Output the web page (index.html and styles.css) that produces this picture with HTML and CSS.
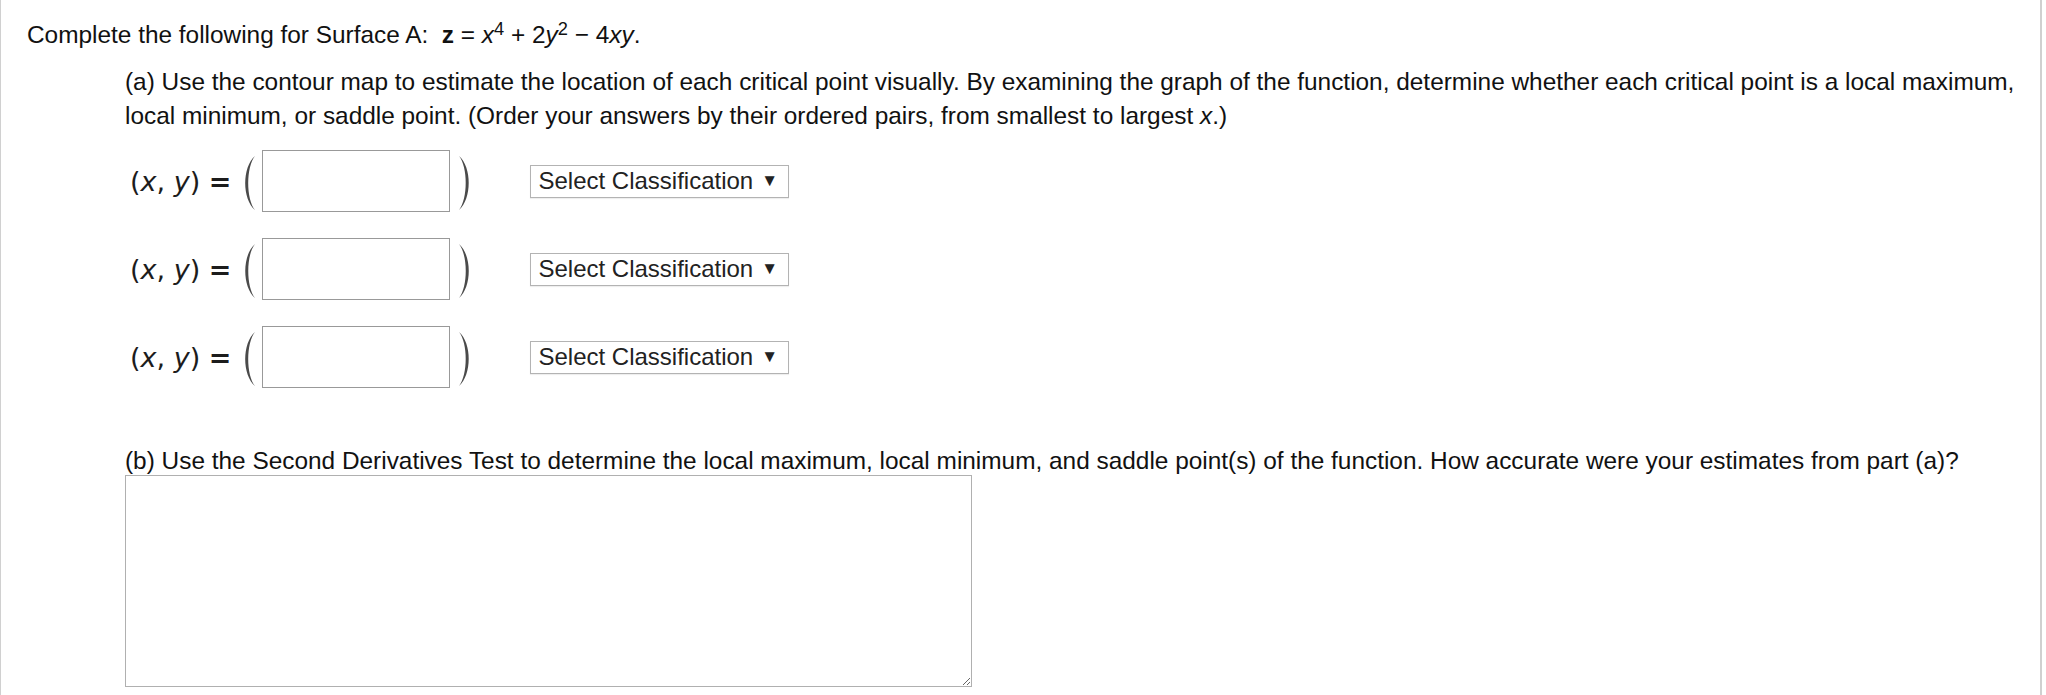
FILE: index.html
```html
<!DOCTYPE html>
<html lang="en">
<head>
    <meta charset="UTF-8">
    <title>Surface A</title>
    <link rel="stylesheet" href="styles.css">
</head>
<body>
    <div class="question">
        <p class="prompt">Complete the following for Surface A:&nbsp; <b class="var-z">z</b> = <i>x</i><sup>4</sup> + 2<i>y</i><sup>2</sup> &minus; 4<i>xy</i>.</p>

        <div class="part">
            <p class="part-text">(a) Use the contour map to estimate the location of each critical point visually. By examining the graph of the function, determine whether each critical point is a local maximum, local minimum, or saddle point. (Order your answers by their ordered pairs, from smallest to largest <i>x</i>.)</p>

            <div class="points">
                <div class="point-row">
                    <span class="pair-label">(<i>x</i>, <i>y</i>) <span class="eq">=</span></span>
                    <svg class="paren" width="18" height="56" viewBox="0 0 18 56"><path d="M16 1 C3 12 3 44 16 55 C7 44 7 12 16 1 Z"/></svg>
                    <input class="answer" type="text">
                    <svg class="paren close" width="18" height="56" viewBox="0 0 18 56"><path d="M2 1 C15 12 15 44 2 55 C11 44 11 12 2 1 Z"/></svg>
                    <div class="select">Select Classification <span class="caret">&#9660;</span></div>
                </div>
                <div class="point-row">
                    <span class="pair-label">(<i>x</i>, <i>y</i>) <span class="eq">=</span></span>
                    <svg class="paren" width="18" height="56" viewBox="0 0 18 56"><path d="M16 1 C3 12 3 44 16 55 C7 44 7 12 16 1 Z"/></svg>
                    <input class="answer" type="text">
                    <svg class="paren close" width="18" height="56" viewBox="0 0 18 56"><path d="M2 1 C15 12 15 44 2 55 C11 44 11 12 2 1 Z"/></svg>
                    <div class="select">Select Classification <span class="caret">&#9660;</span></div>
                </div>
                <div class="point-row">
                    <span class="pair-label">(<i>x</i>, <i>y</i>) <span class="eq">=</span></span>
                    <svg class="paren" width="18" height="56" viewBox="0 0 18 56"><path d="M16 1 C3 12 3 44 16 55 C7 44 7 12 16 1 Z"/></svg>
                    <input class="answer" type="text">
                    <svg class="paren close" width="18" height="56" viewBox="0 0 18 56"><path d="M2 1 C15 12 15 44 2 55 C11 44 11 12 2 1 Z"/></svg>
                    <div class="select">Select Classification <span class="caret">&#9660;</span></div>
                </div>
            </div>

            <p class="part-text part-b">(b) Use the Second Derivatives Test to determine the local maximum, local minimum, and saddle point(s) of the function. How accurate were your estimates from part (a)?</p>
            <textarea class="essay"></textarea>
        </div>
    </div>
</body>
</html>
```

FILE: styles.css
```css
body {
    margin: 0;
    padding: 0;
    background: #fff;
    font-family: "Liberation Sans", Arial, sans-serif;
    color: #111;
}
.question {
    box-sizing: border-box;
    min-height: 100vh;
    margin-right: 4px;
    border-left: 1px solid #d0d0d0;
    border-right: 2px solid #d0d0d0;
    padding: 18px 8px 0 26px;
    font-size: 24.4px;
}
.prompt {
    margin: 0;
    line-height: 34px;
}
.prompt sup {
    font-size: 0.75em;
    line-height: 0;
    vertical-align: 0.45em;
}
.var-z {
    font-weight: bold;
}
.part {
    padding-left: 98px;
}
.part-text {
    margin: 13px 0 0;
    line-height: 34px;
}
.points {
    display: flex;
    flex-direction: column;
    gap: 26px;
    margin-top: 17px;
}
.point-row {
    display: flex;
    align-items: center;
    height: 62px;
    margin-left: 5px;
}
.pair-label {
    font-family: "DejaVu Sans", Verdana, sans-serif;
    font-size: 27px;
    color: #1c1c1c;
    white-space: nowrap;
}
.pair-label .eq {
    font-weight: bold;
}
.paren {
    margin: 4px 0 0 8px;
    fill: #4a4a4a;
}
.paren.close {
    margin-left: 7px;
}
.answer {
    box-sizing: border-box;
    width: 188px;
    height: 62px;
    margin: 0 0 0 5px;
    border: 1px solid #999;
    font-size: 22px;
}
.select {
    box-sizing: border-box;
    height: 33px;
    margin-left: 55px;
    padding: 0 10px 0 7px;
    display: flex;
    align-items: center;
    gap: 8px;
    border: 1px solid #b3b3b3;
    box-shadow: 0 1px 1px #0001;
    font-size: 24px;
    color: #222;
}
.caret {
    font-size: 17px;
}
.part-b {
    margin-top: 59px;
    line-height: 28px;
}
.essay {
    display: block;
    box-sizing: border-box;
    width: 847px;
    height: 212px;
    margin: 0;
    border: 1px solid #b0b0b0;
    font-size: 20px;
}
```
